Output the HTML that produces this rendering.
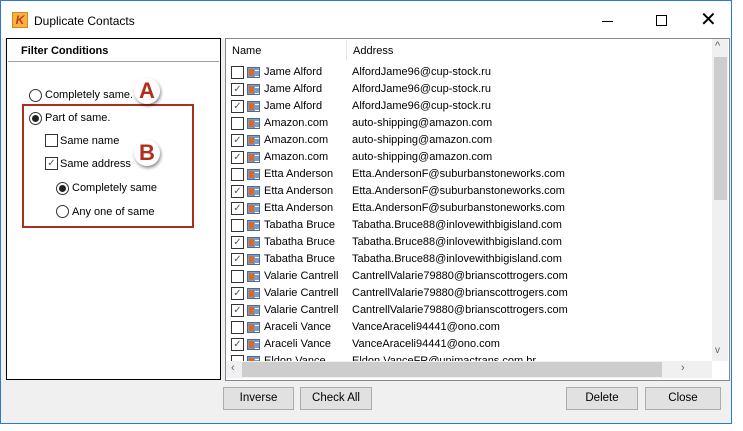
<!DOCTYPE html><html><head><style>
body{margin:0;width:743px;height:431px;background:#fff;font-family:"Liberation Sans",sans-serif;font-size:11px;color:#000;position:relative;overflow:hidden}
.a{position:absolute}
.win{left:0;top:0;width:730px;height:422px;border:1px solid #2b79d0;background:#f0f0f0}
.title{left:1px;top:1px;width:730px;height:37px;background:#fff}
.cb{position:absolute;width:11px;height:11px;border:1px solid #333;background:#fff}
.rad{position:absolute;width:11px;height:11px;border:1px solid #333;border-radius:50%;background:#fff}
.rad.on::after{content:"";position:absolute;left:2px;top:2px;width:7px;height:7px;border-radius:50%;background:#222}
.btn{position:absolute;top:387px;height:21px;border:1px solid #adadad;background:#e1e1e1;text-align:center;line-height:21px;font-size:11.5px}
.row{position:absolute;left:231px;height:17px;width:480px;line-height:17px}
.row .cb{left:0;top:2px}
.ic{position:absolute;left:16px;top:3px;width:13px;height:11px;background:#7a9cc8;border:1px solid #4a6a9a;box-sizing:border-box}
.ic::before{content:"";position:absolute;left:1px;top:1px;width:5px;height:7px;background:#d66a2a}
.ic::after{content:"";position:absolute;left:7px;top:2px;width:4px;height:5px;border-top:1px solid #fff;border-bottom:1px solid #fff}
.nm{position:absolute;left:33px}.ad{position:absolute;left:121px}
.badge{position:absolute;width:26px;height:26px;border-radius:50%;background:#fff;box-shadow:1px 2px 3px rgba(0,0,0,.45);color:#b0301c;font-weight:bold;font-size:22px;text-align:center;line-height:26px}
.row .cb{font-size:10px;line-height:11px;text-align:center;color:#555;overflow:hidden}
</style></head><body>
<div class="a win"></div>
<div class="a title"></div>
<div class="a" style="left:12px;top:12px;width:16px;height:16px;background:#f6b23a;border:1px solid #d08a20;box-sizing:border-box;color:#c0392b;font-weight:bold;font-style:italic;font-size:12px;line-height:14px;text-align:center">K</div>
<div class="a" style="left:34px;top:14px;font-size:12px">Duplicate Contacts</div>
<div class="a" style="left:602px;top:21px;width:11px;height:1px;background:#000"></div>
<div class="a" style="left:656px;top:15px;width:9px;height:9px;border:1px solid #000"></div>
<div class="a" style="left:700px;top:8px;font-size:20px;line-height:24px">✕</div>

<div class="a" style="left:6px;top:38px;width:213px;height:340px;border:1px solid #000;background:#fff"></div>
<div class="a" style="left:21px;top:45px;font-weight:bold">Filter Conditions</div>
<div class="a" style="left:8px;top:61px;width:211px;height:1px;background:#a0a0a0"></div>
<div class="rad" style="left:29px;top:89px"></div><div class="a" style="left:45px;top:89px">Completely same.</div>
<div class="a" style="left:22px;top:104px;width:168px;height:120px;border:2px solid #a8311e"></div>
<div class="rad on" style="left:29px;top:112px"></div><div class="a" style="left:45px;top:112px">Part of same.</div>
<div class="cb" style="left:45px;top:134px"></div><div class="a" style="left:60px;top:135px">Same name</div>
<div class="cb" style="left:45px;top:157px;font-size:10px;line-height:11px;text-align:center;color:#555">✓</div><div class="a" style="left:60px;top:158px">Same address</div>
<div class="rad on" style="left:56px;top:182px"></div><div class="a" style="left:72px;top:182px">Completely same</div>
<div class="rad" style="left:56px;top:205px"></div><div class="a" style="left:72px;top:206px">Any one of same</div>
<div class="badge" style="left:134px;top:78px">A</div>
<div class="badge" style="left:134px;top:140px">B</div>

<div class="a" style="left:225px;top:38px;width:503px;height:341px;border:1px solid #828790;background:#fff"></div>
<div class="a" style="left:232px;top:45px">Name</div>
<div class="a" style="left:346px;top:40px;width:1px;height:20px;background:#e5e5e5"></div>
<div class="a" style="left:353px;top:45px">Address</div>
<div class="a" style="left:712px;top:39px;width:16px;height:322px;background:#f0f0f0"></div>
<div class="a" style="left:714px;top:57px;width:13px;height:143px;background:#cdcdcd"></div>
<div class="a" style="left:715px;top:40px;font-size:11px;color:#606060">^</div>
<div class="a" style="left:715px;top:345px;font-size:10px;color:#606060">v</div>
<div class="a" style="left:226px;top:361px;width:486px;height:17px;background:#f0f0f0"></div>
<div class="a" style="left:242px;top:362px;width:420px;height:15px;background:#cdcdcd"></div>
<div class="a" style="left:231px;top:362px;color:#606060">‹</div>
<div class="a" style="left:681px;top:362px;color:#606060">›</div>

<div class="a" style="left:226px;top:64px;width:486px;height:297px;overflow:hidden">
<div style="position:relative;left:-226px;top:-64px">
<div class="row" style="top:64px"><div class="cb"></div><div class="ic"></div><span class="nm">Jame Alford</span><span class="ad">AlfordJame96@cup-stock.ru</span></div>
<div class="row" style="top:81px"><div class="cb">✓</div><div class="ic"></div><span class="nm">Jame Alford</span><span class="ad">AlfordJame96@cup-stock.ru</span></div>
<div class="row" style="top:98px"><div class="cb">✓</div><div class="ic"></div><span class="nm">Jame Alford</span><span class="ad">AlfordJame96@cup-stock.ru</span></div>
<div class="row" style="top:115px"><div class="cb"></div><div class="ic"></div><span class="nm">Amazon.com</span><span class="ad">auto-shipping@amazon.com</span></div>
<div class="row" style="top:132px"><div class="cb">✓</div><div class="ic"></div><span class="nm">Amazon.com</span><span class="ad">auto-shipping@amazon.com</span></div>
<div class="row" style="top:149px"><div class="cb">✓</div><div class="ic"></div><span class="nm">Amazon.com</span><span class="ad">auto-shipping@amazon.com</span></div>
<div class="row" style="top:166px"><div class="cb"></div><div class="ic"></div><span class="nm">Etta Anderson</span><span class="ad">Etta.AndersonF@suburbanstoneworks.com</span></div>
<div class="row" style="top:183px"><div class="cb">✓</div><div class="ic"></div><span class="nm">Etta Anderson</span><span class="ad">Etta.AndersonF@suburbanstoneworks.com</span></div>
<div class="row" style="top:200px"><div class="cb">✓</div><div class="ic"></div><span class="nm">Etta Anderson</span><span class="ad">Etta.AndersonF@suburbanstoneworks.com</span></div>
<div class="row" style="top:217px"><div class="cb"></div><div class="ic"></div><span class="nm">Tabatha Bruce</span><span class="ad">Tabatha.Bruce88@inlovewithbigisland.com</span></div>
<div class="row" style="top:234px"><div class="cb">✓</div><div class="ic"></div><span class="nm">Tabatha Bruce</span><span class="ad">Tabatha.Bruce88@inlovewithbigisland.com</span></div>
<div class="row" style="top:251px"><div class="cb">✓</div><div class="ic"></div><span class="nm">Tabatha Bruce</span><span class="ad">Tabatha.Bruce88@inlovewithbigisland.com</span></div>
<div class="row" style="top:268px"><div class="cb"></div><div class="ic"></div><span class="nm">Valarie Cantrell</span><span class="ad">CantrellValarie79880@brianscottrogers.com</span></div>
<div class="row" style="top:285px"><div class="cb">✓</div><div class="ic"></div><span class="nm">Valarie Cantrell</span><span class="ad">CantrellValarie79880@brianscottrogers.com</span></div>
<div class="row" style="top:302px"><div class="cb">✓</div><div class="ic"></div><span class="nm">Valarie Cantrell</span><span class="ad">CantrellValarie79880@brianscottrogers.com</span></div>
<div class="row" style="top:319px"><div class="cb"></div><div class="ic"></div><span class="nm">Araceli Vance</span><span class="ad">VanceAraceli94441@ono.com</span></div>
<div class="row" style="top:336px"><div class="cb">✓</div><div class="ic"></div><span class="nm">Araceli Vance</span><span class="ad">VanceAraceli94441@ono.com</span></div>
<div class="row" style="top:353px"><div class="cb"></div><div class="ic"></div><span class="nm">Eldon Vance</span><span class="ad">Eldon.VanceFR@unimactrans.com.br</span></div>
</div></div>

<div class="btn" style="left:223px;width:69px">Inverse</div>
<div class="btn" style="left:300px;width:70px">Check All</div>
<div class="btn" style="left:566px;width:70px">Delete</div>
<div class="btn" style="left:645px;width:74px">Close</div>
</body></html>
